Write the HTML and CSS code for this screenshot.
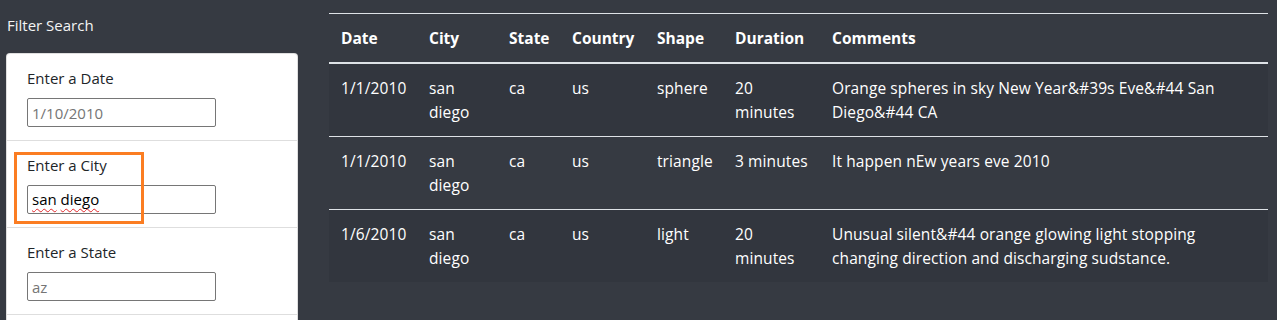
FILE: index.html
```html
<!DOCTYPE html>
<html lang="en">
<head>
<meta charset="utf-8">
<title>UFO Sightings</title>
<link rel="stylesheet" href="styles.css">
</head>
<body>
<div class="page">
  <aside class="sidebar">
    <div class="filter-title">Filter Search</div>
    <div class="card">
      <ul class="list">
        <li class="item">
          <label class="label" for="date">Enter a Date</label>
          <input class="field" id="date" type="text" placeholder="1/10/2010">
        </li>
        <li class="item">
          <label class="label" for="city">Enter a City</label>
          <div class="field filled" id="city"><span class="spell">san</span> <span class="spell">diego</span></div>
        </li>
        <li class="item">
          <label class="label" for="state">Enter a State</label>
          <input class="field" id="state" type="text" placeholder="az">
        </li>
        <li class="item item-more"></li>
      </ul>
      <div class="highlight"></div>
    </div>
  </aside>
  <main class="results">
    <table class="table">
      <colgroup>
        <col class="c-date"><col class="c-city"><col class="c-state"><col class="c-country"><col class="c-shape"><col class="c-duration"><col class="c-comments">
      </colgroup>
      <thead>
        <tr><th>Date</th><th>City</th><th>State</th><th>Country</th><th>Shape</th><th>Duration</th><th>Comments</th></tr>
      </thead>
      <tbody>
        <tr class="odd"><td>1/1/2010</td><td>san diego</td><td>ca</td><td>us</td><td>sphere</td><td>20 minutes</td><td>Orange spheres in sky New Year&amp;#39s Eve&amp;#44 San Diego&amp;#44 CA</td></tr>
        <tr><td>1/1/2010</td><td>san diego</td><td>ca</td><td>us</td><td>triangle</td><td>3 minutes</td><td>It happen nEw years eve 2010</td></tr>
        <tr class="odd"><td>1/6/2010</td><td>san diego</td><td>ca</td><td>us</td><td>light</td><td>20 minutes</td><td>Unusual silent&amp;#44 orange glowing light stopping changing direction and discharging sudstance.</td></tr>
      </tbody>
    </table>
  </main>
</div>
</body>
</html>
```

FILE: styles.css
```css
* { box-sizing: border-box; }
html, body { margin: 0; padding: 0; }
body {
  background: #363a42;
  color: #fff;
  font-family: "Open Sans", "Noto Sans", sans-serif;
  font-size: 15px;
  line-height: 24px;
  overflow: hidden;
  height: 320px;
}
.page {
  display: flex;
  align-items: flex-start;
  gap: 31px;
  padding: 13px 0 0 6px;
}
.sidebar { width: 292px; flex: none; }
.filter-title {
  padding-left: 1px;
  margin-bottom: 16px;
  color: #f4f4f4;
}
.card {
  position: relative;
  background: #fff;
  border: 1px solid rgba(0,0,0,.125);
  border-radius: 4px;
  color: #212529;
}
.list { list-style: none; margin: 0; padding: 0; }
.item {
  padding: 12px 20px 12px 20px;
  height: 87px;
  border-bottom: 1px solid #dedede;
  display: flex;
  flex-direction: column;
  align-items: flex-start;
}
.item-more { border-bottom: none; }
.label { display: block; margin: 0 0 8px; line-height: 24px; }
.field {
  display: block;
  width: 189px;
  height: 29px;
  border: 1px solid #767676;
  border-radius: 2px;
  padding: 0 4px;
  font: inherit;
  font-size: 15px;
  line-height: 27px;
  color: #212529;
  background: #fff;
  outline: none;
}
.field::placeholder { color: #757575; opacity: 1; }
.filled { color: #000; white-space: nowrap; }
.spell {
  text-decoration: underline wavy #e0282b;
  text-decoration-thickness: 1px;
  text-underline-offset: 3px;
  text-decoration-skip-ink: none;
}
.highlight {
  position: absolute;
  left: 7px;
  top: 98px;
  width: 130px;
  height: 72px;
  border: 3px solid #fb7d22;
  pointer-events: none;
}
.results { width: 939px; flex: none; }
.table {
  width: 939px;
  table-layout: fixed;
  border-collapse: collapse;
  color: #fff;
  font-size: 15.5px;
  letter-spacing: 0.1px;
}
.c-date { width: 88px; }
.c-city { width: 80px; }
.c-state { width: 63px; }
.c-country { width: 85px; }
.c-shape { width: 78px; }
.c-duration { width: 97px; }
.c-comments { width: 448px; }
.table th, .table td {
  padding: 12px;
  text-align: left;
  vertical-align: top;
  border-top: 1px solid #dee2e6;
}
.table th { font-weight: 700; letter-spacing: 0; border-bottom: 2px solid #dee2e6; }
.table tbody tr:first-child td { border-top: none; }
.table tr.odd td { background: rgba(0,0,0,.06); }
```
